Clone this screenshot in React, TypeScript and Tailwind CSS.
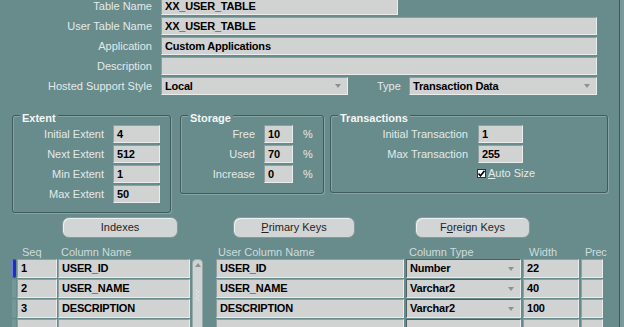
import React from "react";

const Arrow = () => (
  <svg width="6" height="4" viewBox="0 0 6 4" className="shrink-0">
    <path d="M0 0h6L3 4z" fill="#8c9292" />
  </svg>
);

type FieldProps = {
  value?: string;
  className: string;
  dropdown?: boolean;
};

const Field = ({ value = "", className, dropdown }: FieldProps) => (
  <div
    className={`flex items-center justify-between shrink-0 bg-[#d1d2d2] border border-t-[#8e9f9f] border-l-[#8e9f9f] border-b-[#e9eded] border-r-[#e9eded] pl-[3px] pr-[6px] text-[11px] font-bold leading-none text-black tracking-[-0.2px] whitespace-nowrap overflow-hidden ${className}`}
  >
    <span>{value}</span>
    {dropdown && <Arrow />}
  </div>
);

const Label = ({ children, className }: { children: React.ReactNode; className: string }) => (
  <div className={`shrink-0 text-right text-[11px] leading-none text-[#e3eaea] whitespace-nowrap ${className}`}>
    {children}
  </div>
);

const Group = ({
  title,
  className,
  children,
}: {
  title: string;
  className: string;
  children: React.ReactNode;
}) => (
  <div
    className={`shrink-0 rounded-[3px] border border-[#3f5b5b] shadow-[inset_1px_1px_0_#86a6a6,1px_1px_0_#86a6a6] ${className}`}
  >
    <div className="-mt-[5px] flex h-[14px]">
      <span className="ml-[7px] bg-[#688b8b] px-[2px] text-[11px] font-bold leading-[14px] text-[#f3f7f7]">
        {title}
      </span>
    </div>
    {children}
  </div>
);

const Button = ({ children, className }: { children: React.ReactNode; className: string }) => (
  <div
    className={`flex h-[21px] shrink-0 items-center justify-center rounded-[7px] border border-[#859a9a] bg-[#d2d5d5] text-[11px] text-[#1f2424] shadow-[inset_1px_1px_0_#eef1f1] ${className}`}
  >
    {children}
  </div>
);

const rows = [
  { seq: "1", name: "USER_ID", type: "Number", width: "22" },
  { seq: "2", name: "USER_NAME", type: "Varchar2", width: "40" },
  { seq: "3", name: "DESCRIPTION", type: "Varchar2", width: "100" },
  { seq: "", name: "", type: "", width: "" },
];

export default function App() {
  return (
    <div className="flex h-[327px] w-[624px] overflow-hidden bg-[#688b8b] font-['Liberation_Sans',Arial,sans-serif]">
      <div className="w-[619px] shrink-0">
        {/* header fields */}
        <div className="-mt-[3px] flex flex-col gap-[2px]">
          <div className="flex items-center gap-[9px]">
            <Label className="w-[152px]">Table Name</Label>
            <Field className="h-[18px] w-[237px]" value="XX_USER_TABLE" />
          </div>
          <div className="flex items-center gap-[9px]">
            <Label className="w-[152px]">User Table Name</Label>
            <Field className="h-[18px] w-[436px]" value="XX_USER_TABLE" />
          </div>
          <div className="flex items-center gap-[9px]">
            <Label className="w-[152px]">Application</Label>
            <Field className="h-[18px] w-[436px]" value="Custom Applications" />
          </div>
          <div className="flex items-center gap-[9px]">
            <Label className="w-[152px]">Description</Label>
            <Field className="h-[18px] w-[436px]" />
          </div>
          <div className="flex items-center">
            <Label className="w-[152px]">Hosted Support Style</Label>
            <Field className="ml-[9px] h-[18px] w-[187px]" value="Local" dropdown />
            <Label className="ml-[29px] w-[32px] !text-left">Type</Label>
            <Field className="h-[18px] w-[188px]" value="Transaction Data" dropdown />
          </div>
        </div>

        {/* group boxes */}
        <div className="mt-[20px] flex items-start">
          <Group title="Extent" className="ml-[12px] w-[159px] pb-[9px]">
            <div className="flex flex-col gap-[2px]">
              {[
                ["Initial Extent", "4"],
                ["Next Extent", "512"],
                ["Min Extent", "1"],
                ["Max Extent", "50"],
              ].map(([l, v]) => (
                <div key={l} className="flex items-center gap-[9px]">
                  <Label className="w-[91px]">{l}</Label>
                  <Field className="h-[18px] w-[47px]" value={v} />
                </div>
              ))}
            </div>
          </Group>
          <Group title="Storage" className="ml-[9px] w-[144px] pb-[10px]">
            <div className="flex flex-col gap-[2px]">
              {[
                ["Free", "10"],
                ["Used", "70"],
                ["Increase", "0"],
              ].map(([l, v]) => (
                <div key={l} className="flex items-center">
                  <Label className="w-[74px]">{l}</Label>
                  <Field className="ml-[9px] h-[18px] w-[29px]" value={v} />
                  <span className="ml-[10px] text-[11px] leading-none text-[#e3eaea]">%</span>
                </div>
              ))}
            </div>
          </Group>
          <Group title="Transactions" className="ml-[6px] w-[278px] pb-[14px]">
            <div className="flex flex-col gap-[2px]">
              {[
                ["Initial Transaction", "1"],
                ["Max Transaction", "255"],
              ].map(([l, v]) => (
                <div key={l} className="flex items-center gap-[10px]">
                  <Label className="w-[137px]">{l}</Label>
                  <Field className="h-[18px] w-[45px]" value={v} />
                </div>
              ))}
            </div>
            <div className="ml-[146px] mt-[5px] flex h-[10px] items-center gap-[2px]">
              <div className="flex h-[9px] w-[9px] items-center justify-center border border-[#2e3434] bg-white">
                <svg width="7" height="7" viewBox="0 0 7 7">
                  <path d="M0.5 3.5 L2.5 5.8 L6.5 0.8" stroke="#000" strokeWidth="1.6" fill="none" />
                </svg>
              </div>
              <span className="text-[11px] leading-none text-[#e3eaea]">
                <span className="underline">A</span>uto Size
              </span>
            </div>
          </Group>
        </div>

        {/* buttons */}
        <div className="mt-[4px] flex">
          <Button className="ml-[62px] w-[116px]">Indexes</Button>
          <Button className="ml-[55px] w-[122px]">
            <span>
              <span className="underline">P</span>rimary Keys
            </span>
          </Button>
          <Button className="ml-[60px] w-[115px]">
            <span>
              F<span className="underline">o</span>reign Keys
            </span>
          </Button>
        </div>

        {/* column headers */}
        <div className="mt-[7px] flex h-[14px] text-[11px] leading-[14px] text-[#cfdcdc]">
          <div className="w-[61px] shrink-0 pl-[22px]">Seq</div>
          <div className="w-[157px] shrink-0">Column Name</div>
          <div className="w-[191px] shrink-0">User Column Name</div>
          <div className="w-[120px] shrink-0">Column Type</div>
          <div className="w-[56px] shrink-0">Width</div>
          <div className="w-[24px] shrink-0 whitespace-nowrap tracking-[-0.3px]">Prec</div>
        </div>

        {/* rows */}
        <div className="flex items-start">
          <div className="ml-[12px] flex flex-col gap-[1px]">
            {rows.map((r, i) => (
              <div key={i} className="flex gap-[1px]">
                <div
                  className={`h-[19px] w-[4px] rounded-[2px] ${
                    i === 0 ? "bg-[#1c30b8] shadow-[inset_1px_0_0_#6f80e0]" : "bg-[#759797]"
                  }`}
                />
                <Field className="h-[19px] w-[40px]" value={r.seq} />
                <Field className="h-[19px] w-[132px]" value={r.name} />
              </div>
            ))}
          </div>
          <div className="ml-[2px] flex h-[79px] w-[11px] flex-col items-center rounded-t-[4px] border border-[#97a9a9] bg-[#ced3d3]">
            <svg width="6" height="4" viewBox="0 0 6 4" className="mt-[3px]">
              <path d="M3 0L6 4H0z" fill="#8c9292" />
            </svg>
            <svg width="5" height="12" viewBox="0 0 5 12" className="mt-[22px]">
              <path d="M1 1h1M3 3h1M1 5h1M3 7h1M1 9h1M3 11h1" stroke="#f4f6f6" strokeWidth="1" />
            </svg>
          </div>
          <div className="ml-[13px] flex flex-col gap-[1px]">
            {rows.map((r, i) => (
              <div key={i} className="flex gap-[2px]">
                <Field className="h-[19px] w-[188px]" value={r.name} />
                <Field
                  className="h-[19px] w-[115px] !border-t-[#4f5e5e] !border-l-[#4f5e5e]"
                  value={r.type}
                  dropdown={r.type !== ""}
                />
                <Field className="h-[19px] w-[56px]" value={r.width} />
                <Field className="h-[19px] w-[22px]" />
              </div>
            ))}
          </div>
        </div>
      </div>
      <div className="w-[1px] shrink-0 bg-[#3f5959]" />
      <div className="flex-1 bg-[#7a9a9a]" />
    </div>
  );
}
